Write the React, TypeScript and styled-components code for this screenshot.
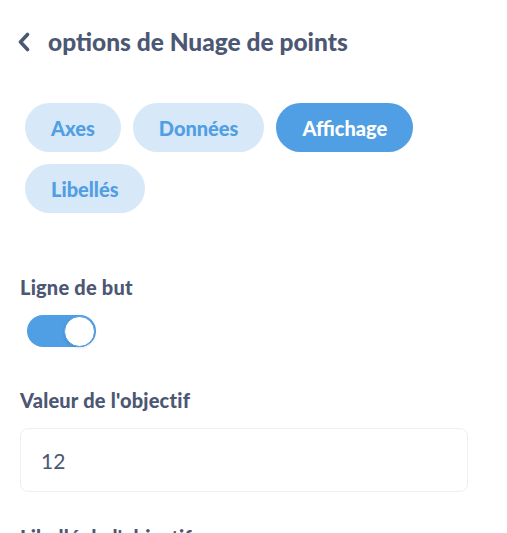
import React, { useState } from "react";
import styled, { createGlobalStyle } from "styled-components";

const Global = createGlobalStyle`
  html, body { margin: 0; padding: 0; background: #fff; }
  body { font-family: Lato, "Open Sans", sans-serif; color: #4c5773; overflow: hidden; }
`;

const Panel = styled.div`
  width: 507px;
  height: 533px;
  box-sizing: border-box;
  padding: 28px 39px 0 20px;
  overflow: hidden;
`;

const Header = styled.div`
  display: flex;
  align-items: center;
  gap: 18px;
  height: 28px;
  line-height: 28px;
  font-size: 24.5px;
  font-weight: 900;
  color: #4c5773;
`;

const Back = styled.svg`
  width: 13px;
  height: 20px;
  margin-left: -3px;
`;

const Tabs = styled.div`
  display: flex;
  flex-wrap: wrap;
  gap: 12px;
  margin-top: 47px;
  padding-left: 5px;
  width: 400px;
`;

const Pill = styled.button<{ $active?: boolean }>`
  height: 49px;
  padding: 0 26px;
  border: none;
  border-radius: 25px;
  font-family: Lato, sans-serif;
  font-size: 20px;
  font-weight: 900;
  background: ${(p) => (p.$active ? "#509ee3" : "#d7e8f8")};
  color: ${(p) => (p.$active ? "#ffffff" : "#509ee3")};
  cursor: pointer;
`;

const Field = styled.div<{ $top: number }>`
  margin-top: ${(p) => p.$top}px;
  display: flex;
  flex-direction: column;
`;

const Label = styled.div`
  font-size: 20px;
  line-height: 24px;
  font-weight: 900;
  letter-spacing: 0.2px;
  color: #4c5773;
`;

const Toggle = styled.div<{ $on: boolean }>`
  margin-top: 16px;
  margin-left: 7px;
  width: 69px;
  height: 32px;
  border-radius: 16px;
  background: ${(p) => (p.$on ? "#509ee3" : "#e4e9ee")};
  display: flex;
  align-items: center;
  justify-content: ${(p) => (p.$on ? "flex-end" : "flex-start")};
  cursor: pointer;
`;

const Knob = styled.div`
  width: 31px;
  height: 31px;
  border-radius: 50%;
  background: #fff;
  border: 1.5px solid #509ee3;
  box-sizing: border-box;
  margin: 0 1px;
  box-shadow: 0 1px 3px rgba(0, 0, 0, 0.12);
`;

const Input = styled.input`
  margin-top: 16px;
  width: 448px;
  height: 64px;
  box-sizing: border-box;
  border: 1.5px solid #eeeff1;
  border-radius: 8px;
  padding: 0 20px;
  font-family: Lato, sans-serif;
  font-size: 21px;
  color: #4c5773;
  outline: none;
`;

export default function App() {
  const [tab, setTab] = useState("Affichage");
  const [on, setOn] = useState(true);
  const tabs = ["Axes", "Données", "Affichage", "Libellés"];
  return (
    <>
      <Global />
      <Panel>
        <Header>
          <Back viewBox="0 0 13 20">
            <path d="M10.5 2.5 L3.5 10 L10.5 17.5" fill="none" stroke="#4c5773" strokeWidth="3.6" strokeLinecap="round" strokeLinejoin="round" />
          </Back>
          options de Nuage de points
        </Header>
        <Tabs>
          {tabs.map((t) => (
            <Pill key={t} $active={t === tab} onClick={() => setTab(t)}>
              {t}
            </Pill>
          ))}
        </Tabs>
        <Field $top={62}>
          <Label>Ligne de but</Label>
          <Toggle $on={on} onClick={() => setOn(!on)}>
            <Knob />
          </Toggle>
        </Field>
        <Field $top={41}>
          <Label>Valeur de l'objectif</Label>
          <Input defaultValue="12" />
        </Field>
        <Field $top={33}>
          <Label>Libellé de l'objectif</Label>
        </Field>
      </Panel>
    </>
  );
}
